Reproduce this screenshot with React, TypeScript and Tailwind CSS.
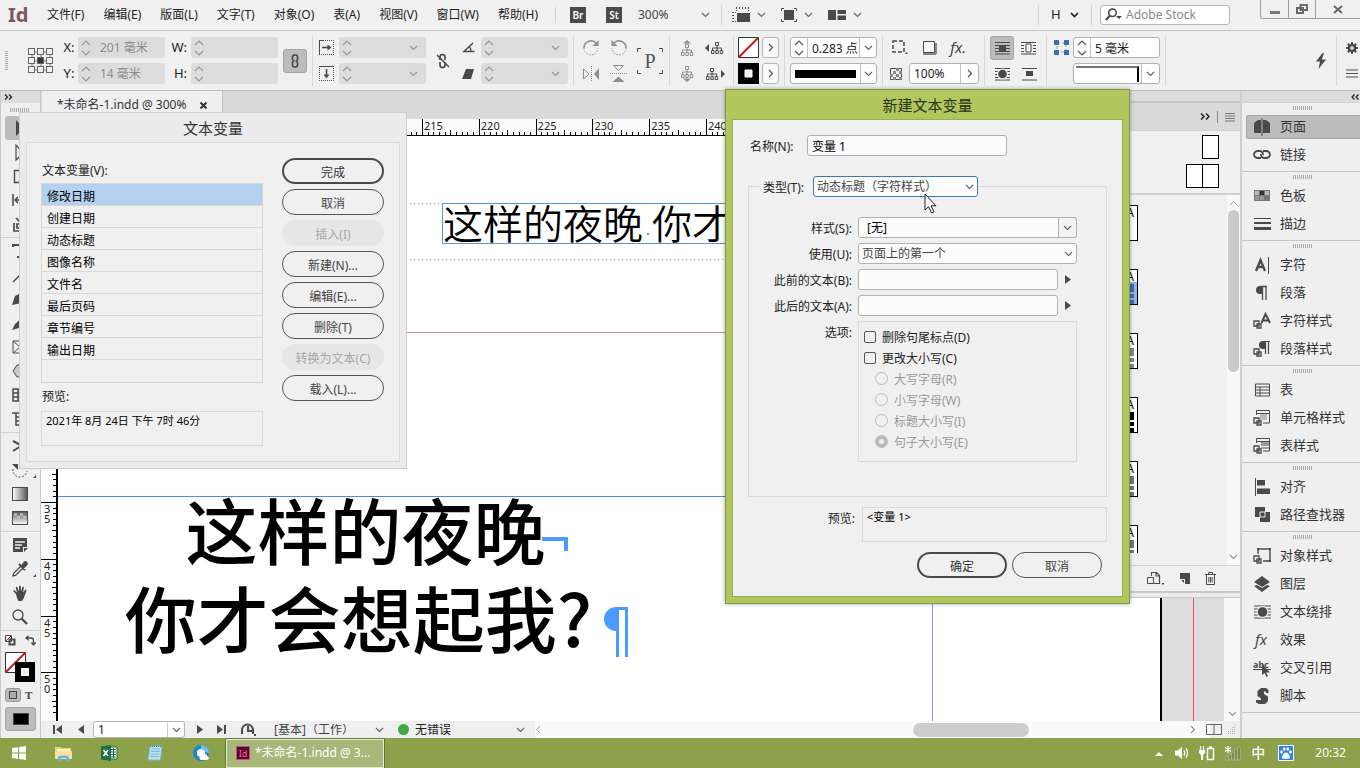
import React from "react";

type Kids = { children?: React.ReactNode };

function Svg({ w, h, children, className = "" }: Kids & { w: number; h: number; className?: string }) {
  return (
    <svg width={w} height={h} viewBox={`0 0 ${w} ${h}`} fill="none" stroke="none" aria-hidden="true" className={`shrink-0 overflow-visible ${className}`}>
      {children}
    </svg>
  );
}

const D = "#4a4a4a";
const G = "#8f8f8f";

function Chevron({ className = "", color = "#666" }: { className?: string; color?: string }) {
  return (
    <Svg w={9} h={6} className={className}>
      <path d="M1 1l3.5 3.5L8 1" stroke={color} strokeWidth="1.2" />
    </Svg>
  );
}

function ChevronRight({ color = "#555" }: { color?: string }) {
  return (
    <Svg w={6} h={9}>
      <path d="M1 1l3.5 3.5L1 8" stroke={color} strokeWidth="1.2" />
    </Svg>
  );
}

function Spinner({ color = "#999" }: { color?: string }) {
  return (
    <Svg w={10} h={16}>
      <path d="M1 5l4-4 4 4M1 11l4 4 4-4" stroke={color} strokeWidth="1.2" />
    </Svg>
  );
}

function Sep() {
  return <div className="my-1 w-px shrink-0 self-stretch bg-[#d8d8d8]" />;
}

function GrayField({ label, value = "", arrow = false }: { label: string; value?: string; arrow?: boolean }) {
  return (
    <div className="flex h-[21px] w-[87px] items-center rounded-[3px] bg-[#dcdcdc] pr-1 pl-[3px]">
      <Spinner />
      <input aria-label={label} defaultValue={value} className="w-0 flex-1 bg-transparent pl-[9px] text-xs text-[#8a8a8a] outline-none" />
      {arrow && <Chevron color="#999" className="mr-1" />}
    </div>
  );
}

const menus = ["文件(F)", "编辑(E)", "版面(L)", "文字(T)", "对象(O)", "表(A)", "视图(V)", "窗口(W)", "帮助(H)"];

function MenuBar() {
  return (
    <header className="flex h-[31px] shrink-0 items-center border-b border-[#c6c6c6] text-xs text-[#222]">
      <div className="w-[47px] shrink-0 pl-2 text-xl leading-none font-bold text-[#7c5766]">Id</div>
      <nav className="flex w-[508px] shrink-0 gap-[19px]">
        {menus.map((m) => (
          <button key={m} className="whitespace-nowrap">{m}</button>
        ))}
      </nav>
      <div className="flex w-[166px] shrink-0 items-center border-l border-[#d4d4d4] pl-[14px]">
        <button className="h-4 w-4 bg-[#4a4a4a] text-[10px] leading-4 font-semibold text-white">Br</button>
        <button className="ml-5 h-4 w-4 bg-[#4a4a4a] text-[10px] leading-4 font-semibold text-white">St</button>
        <label className="relative ml-4 flex flex-1 items-center text-[#444]">
          <select aria-label="缩放" className="w-full appearance-none bg-transparent outline-none">
            <option>300%</option>
          </select>
          <Chevron className="pointer-events-none absolute right-[11px]" />
        </label>
      </div>
      <div className="flex h-5 items-center gap-[7px] border-l border-[#d4d4d4] pl-[10px]">
        <Svg w={18} h={16}>
          <path d="M5 6h13v9H5z" fill={D} />
          <path d="M4.500 0v4M7.500 0v3M10.500 0v3M13.500 0v3M16.500 0v4M0 5.500h4M0 8.500h3M0 11.500h3M0 14.500h4" stroke={D} strokeDasharray="2 1" />
        </Svg>
        <Chevron />
        <Svg w={16} h={14} className="ml-2">
          <path d="M3 2h10v10H3z" fill={D} />
          <path d="M.5 3V.5H3M13 .5h2.500V3M15.500 11v2.500H13M3 13.500H.5V11" stroke={D} />
        </Svg>
        <Chevron />
        <Svg w={18} h={12} className="ml-2">
          <path d="M0 1h8v10H0zM9.500 1H18v4H9.500zM9.500 6.500H18V11H9.500z" fill={D} />
        </Svg>
        <Chevron />
      </div>
      <div className="flex-1" />
      <button className="flex h-5 w-[53px] items-center gap-[9px] border-l border-[#d4d4d4] pl-3 text-[13px]">
        H <Svg w={9} h={6}><path d="M1 1l3.500 3.500L8 1" stroke="#222" strokeWidth="1.700" /></Svg>
      </button>
      <div className="flex h-5 items-center border-l border-[#d4d4d4] pl-2">
        <label className="flex h-5 w-[130px] items-center rounded-[3px] border border-[#b5b5b5] bg-white px-1">
          <Svg w={18} h={14}>
            <circle cx="7.500" cy="4.800" r="3.800" stroke="#444" strokeWidth="1.500" />
            <path d="M4.800 7.800L.8 12" stroke="#444" strokeWidth="2" />
            <path d="M11 8h6l-3 3z" fill="#444" />
          </Svg>
          <input placeholder="Adobe Stock" aria-label="Adobe Stock" className="w-0 flex-1 bg-transparent pl-[3px] text-xs outline-none placeholder:text-[#888]" />
        </label>
      </div>
      <div className="ml-[30px] flex h-[19px] w-[100px] self-start rounded-bl-[3px] border-b border-l border-[#9d9d9d]">
        <button aria-label="最小化" className="flex w-7 items-end justify-center border-r border-[#9d9d9d] pb-1">
          <Svg w={10} h={3}><path d="M0 0h10v3H0z" fill="#777" /></Svg>
        </button>
        <button aria-label="还原" className="flex w-[27px] items-center justify-center border-r border-[#9d9d9d]">
          <Svg w={12} h={10}><path d="M4.500 1h6.500v5H4.500zM1 4h6v5H1z" fill="#f0f0f0" stroke="#6a6a6a" strokeWidth="2" /></Svg>
        </button>
        <button aria-label="关闭" className="flex flex-1 items-center justify-center">
          <Svg w={10} h={9}><path d="M1 1l8 7M9 1L1 8" stroke="#666" strokeWidth="2" /></Svg>
        </button>
      </div>
    </header>
  );
}

function TwoRows({ children, className = "" }: Kids & { className?: string }) {
  return <div className={`flex shrink-0 flex-col gap-[5px] ${className}`}>{children}</div>;
}

function Cell({ children, className = "" }: Kids & { className?: string }) {
  return <div className={`flex h-[21px] items-center ${className}`}>{children}</div>;
}

function Tree({ color, arrow }: { color: string; arrow: "up" | "down" | "left" | "right" }) {
  const side = arrow === "left" || arrow === "right";
  return (
    <Svg w={20} h={16}>
      {arrow === "up" && <path d="M6 3.500L10 0l4 3.500z" fill={color} />}
      {arrow === "down" && <path d="M6 12.500h8L10 16z" fill={color} />}
      {arrow === "left" && <path d="M4 4L0 8l4 4z" fill={color} />}
      {arrow === "right" && <path d="M16 4l4 4-4 4z" fill={color} />}
      <g transform={side ? (arrow === "left" ? "translate(2 0)" : "translate(-3 0)") : arrow === "up" ? "translate(0 2)" : "translate(0 -2)"}>
        <path d="M8.500 2.500h3v3h-3zM4.500 10.500h2.500v3H4.500zM8.800 10.500h2.500v3H8.800zM13.200 10.500h2.500v3h-2.500z" stroke={color} />
        <path d="M10 5.500v5M5.500 10V8h9v2" stroke={color} />
      </g>
    </Svg>
  );
}

function WrapIcon({ shape }: { shape: "solid" | "box" | "circle" | "jump" }) {
  return (
    <Svg w={15} h={14}>
      <path d="M0 1.500h15M0 4.500h15M0 7.500h15M0 10.500h15M0 13h15" stroke={D} strokeWidth="1.200" />
      {shape === "solid" && <path d="M4 4h7v6H4z" fill={D} />}
      {shape === "box" && <><path d="M3 3h9v9H3z" fill="#f0f0f0" /><path d="M5 3h5v8H5z" fill="#fff" stroke={D} /></>}
      {shape === "circle" && <><circle cx="7.500" cy="7" r="5.500" fill="#f0f0f0" /><circle cx="7.500" cy="7" r="4.300" fill={D} /></>}
      {shape === "jump" && <><path d="M0 3h15v8.500H0z" fill="#f0f0f0" /><path d="M4 4h7v5H4z" fill={D} /></>}
    </Svg>
  );
}

function ControlBar() {
  return (
    <div className="flex h-[60px] shrink-0 items-center border-b border-[#bdbdbd] text-[13px] text-[#222]">
      <div className="ml-[5px] h-5 w-[3px] shrink-0 bg-[repeating-linear-gradient(#aaa_0_1px,transparent_1px_2px)]" />
      <Svg w={26} h={26} className="ml-5">
        <path d="M4 4h18v18H4zM4 13h18M13 4v18" stroke="#777" />
        {[0, 1, 2].map((r) => [0, 1, 2].map((c) => (
          <rect key={`${r}${c}`} x={c * 9 + 0.5} y={r * 9 + 0.5} width="6" height="6" fill={r === 1 && c === 1 ? "#333" : "#f0f0f0"} stroke="#666" />
        )))}
      </Svg>
      <TwoRows className="ml-1.5 w-[18px]">
        <Cell className="justify-center">X:</Cell>
        <Cell className="justify-center">Y:</Cell>
      </TwoRows>
      <TwoRows>
        <GrayField label="X" value="201 毫米" />
        <GrayField label="Y" value="14 毫米" />
      </TwoRows>
      <TwoRows className="w-[26px]">
        <Cell className="justify-end pr-1">W:</Cell>
        <Cell className="justify-end pr-1">H:</Cell>
      </TwoRows>
      <TwoRows>
        <GrayField label="W" />
        <GrayField label="H" />
      </TwoRows>
      <button aria-label="约束比例" className="mx-[5px] flex h-6 w-6 shrink-0 items-center justify-center rounded-[3px] border border-[#a5a5a5] bg-[#bcbcbc]">
        <Svg w={8} h={14}><path d="M1.500 6V3a2 2 0 012-2h1a2 2 0 012 2v2.500a2 2 0 01-2 2M6.500 8v3a2 2 0 01-2 2h-1a2 2 0 01-2-2V8.500a2 2 0 012-2" stroke="#444" strokeWidth="1.600" /></Svg>
      </button>
      <Sep />
      <TwoRows className="ml-1.5 w-5">
        <Cell><Svg w={15} h={15}><path d="M.5 0v15M0 .5h5" stroke={D} /><path d="M0 .5h14.500v14H0" stroke={D} strokeDasharray="1 1" /><path d="M3 7.500h7" stroke={D} strokeWidth="1.600" /><path d="M8.500 4.500l4 3-4 3z" fill={D} /></Svg></Cell>
        <Cell><Svg w={15} h={15}><path d="M0 .5h15" stroke={D} /><path d="M.5 0v14.500h14V0" stroke={D} strokeDasharray="1 1" /><path d="M7.500 3v6" stroke={D} strokeWidth="1.600" /><path d="M4.500 8.500h6l-3 4z" fill={D} /></Svg></Cell>
      </TwoRows>
      <TwoRows>
        <GrayField label="水平缩放" arrow />
        <GrayField label="垂直缩放" arrow />
      </TwoRows>
      <Svg w={14} h={16} className="ml-[10px]">
        <path d="M4 7V4a2.500 2.500 0 015 0v3M4 9v3a2.500 2.500 0 005 0V9" stroke={D} strokeWidth="1.700" />
        <path d="M1 2l12 12" stroke={D} strokeWidth="1.500" />
      </Svg>
      <TwoRows className="ml-3 w-[19px]">
        <Cell><Svg w={13} h={11}><path d="M11 1L2 9.500h10.500M7 4.500c1.500 1 2 2.800 2 5" stroke={D} strokeWidth="1.500" /></Svg></Cell>
        <Cell><Svg w={13} h={10}><path d="M4 0h8L9 10H0z" fill={D} /></Svg></Cell>
      </TwoRows>
      <TwoRows>
        <GrayField label="旋转" arrow />
        <GrayField label="切变" arrow />
      </TwoRows>
      <div className="w-[5px] shrink-0" />
      <Sep />
      <TwoRows className="ml-2">
        <Cell className="gap-2">
          <Svg w={19} h={17}><path d="M2 9a7 7 0 0112-5" stroke={G} strokeWidth="1.500" /><path d="M16.500 1v6h-6z" fill={G} /><path d="M2 9a7 7 0 0014 0" stroke={G} strokeDasharray="1.500 1.500" /></Svg>
          <Svg w={19} h={17}><path d="M17 9A7 7 0 005 4" stroke={G} strokeWidth="1.500" /><path d="M2.500 1v6h6z" fill={G} /><path d="M17 9a7 7 0 01-14 0" stroke={G} strokeDasharray="1.500 1.500" /></Svg>
        </Cell>
        <Cell className="gap-2">
          <Svg w={19} h={16}><path d="M1.500 3v10L7 8z" stroke={G} /><path d="M17 2v12l-5-6z" fill={G} /><path d="M9.500 0v16" stroke={G} strokeDasharray="1 1" /></Svg>
          <Svg w={19} h={17}><path d="M4.500 .5h10l-5 5z" stroke={G} /><path d="M3.500 17h12l-6-5.500z" fill={G} /><path d="M1 8.500h17" stroke={G} strokeDasharray="1 1" /></Svg>
        </Cell>
      </TwoRows>
      <div className="relative ml-[9px] flex h-[26px] w-[26px] shrink-0 items-center justify-center text-xl leading-none text-[#555] [font-family:'Liberation_Serif',serif]">
        <Svg w={26} h={26} className="absolute inset-0"><path d="M.5 4V.5H4M22 .5h3.500V4M25.500 22v3.500H22M4 25.500H.5V22" stroke={D} /></Svg>
        P
      </div>
      <div className="w-[6px] shrink-0" />
      <Sep />
      <TwoRows className="ml-[7px] w-[56px]">
        <Cell className="gap-2"><Tree color={G} arrow="up" /><Tree color={D} arrow="left" /></Cell>
        <Cell className="gap-2"><Tree color={G} arrow="down" /><Tree color={D} arrow="right" /></Cell>
      </TwoRows>
      <Sep />
      <TwoRows className="ml-1">
        <Cell className="gap-[3px]">
          <Svg w={21} h={21}><path d="M.5 .5h20v20H.5z" fill="#fff" stroke="#333" /><path d="M1 20L20 1" stroke="#c8171e" strokeWidth="2" /></Svg>
          <button aria-label="填色" className="flex h-[21px] w-[17px] items-center justify-center rounded-[3px] border border-[#b5b5b5] bg-[#fafafa]"><ChevronRight /></button>
        </Cell>
        <Cell className="gap-[3px]">
          <Svg w={21} h={21}><path d="M0 0h21v21H0z" fill="#000" /><path d="M7 7h7v7H7z" fill="#f0f0f0" stroke="#fff" /></Svg>
          <button aria-label="描边颜色" className="flex h-[21px] w-[17px] items-center justify-center rounded-[3px] border border-[#b5b5b5] bg-[#fafafa]"><ChevronRight /></button>
        </Cell>
      </TwoRows>
      <div className="w-[5px] shrink-0" />
      <Sep />
      <TwoRows className="ml-[5px] w-[87px]">
        <div className="flex h-[21px] items-center overflow-hidden rounded-[3px] border border-[#b0b0b0] bg-white text-xs">
          <span className="flex w-4 justify-center"><Spinner color="#555" /></span>
          <input aria-label="描边粗细" defaultValue="0.283 点" className="h-full w-0 flex-1 border-r border-l border-[#c0c0c0] pl-1 outline-none" />
          <span className="flex w-4 justify-center"><Chevron /></span>
        </div>
        <button aria-label="描边类型" className="flex h-[21px] items-center rounded-[3px] border border-[#b0b0b0] bg-white">
          <span className="mx-1 h-2 flex-1 bg-black" />
          <span className="flex h-full w-4 items-center justify-center border-l border-[#c0c0c0]"><Chevron /></span>
        </button>
      </TwoRows>
      <div className="w-[5px] shrink-0" />
      <Sep />
      <TwoRows className="ml-[7px] w-[94px]">
        <Cell className="justify-between pr-[18px] pl-0.5">
          <Svg w={16} h={15}><path d="M1 1h11v11H1z" stroke={D} strokeWidth="1.500" strokeDasharray="4 2" /><path d="M13.500 12.500h2v1.500h-2z" fill={D} /></Svg>
          <Svg w={15} h={15}><path d="M1.500 1.500h11v11h-11z" fill="#f6f6f6" stroke={D} /><path d="M1 14h13M14 3v11" stroke="#888" strokeWidth="2" /></Svg>
          <span className="text-[15px] leading-none text-[#444] italic">fx.</span>
        </Cell>
        <Cell className="gap-[6px]">
          <Svg w={13} h={12}><path d="M.5 .5h11v11H.5z" stroke={D} /><path d="M3 3h3v3H3zM6 6h3v3H6zM9 3h3v3H9zM3 9h3v3H3zM9 9h3v3H9zM0 6h3v3H0zM6 0h3v3H6z" fill="#888" /></Svg>
          <div className="flex h-[21px] w-[70px] items-center rounded-[3px] border border-[#b0b0b0] bg-white text-xs">
            <input aria-label="不透明度" defaultValue="100%" className="h-full w-0 flex-1 pl-1 outline-none" />
            <span className="flex h-full w-[18px] items-center justify-center border-l border-[#c0c0c0]"><ChevronRight /></span>
          </div>
        </Cell>
      </TwoRows>
      <Sep />
      <TwoRows className="ml-[5px] w-[56px]">
        <Cell className="gap-[7px]">
          <span className="flex h-6 w-6 items-center justify-center rounded-[3px] border border-[#a5a5a5] bg-[#bcbcbc]"><WrapIcon shape="solid" /></span>
          <WrapIcon shape="box" />
        </Cell>
        <Cell className="gap-3 pl-[5px]"><WrapIcon shape="circle" /><WrapIcon shape="jump" /></Cell>
      </TwoRows>
      <Sep />
      <TwoRows className="ml-[7px] w-[19px]">
        <Cell><Svg w={15} h={15}><path d="M3 3h9v9H3z" stroke="#999" strokeDasharray="3 2" /><path d="M0 0h5v5H0zM10 0h5v5h-5zM0 10h5v5H0zM10 10h5v5h-5z" fill="#3a6fae" /></Svg></Cell>
        <Cell />
      </TwoRows>
      <TwoRows className="w-[87px]">
        <div className="flex h-[21px] items-center overflow-hidden rounded-[3px] border border-[#b0b0b0] bg-white text-xs">
          <span className="flex w-4 justify-center"><Spinner color="#555" /></span>
          <input aria-label="转角大小" defaultValue="5 毫米" className="h-full w-0 flex-1 border-l border-[#c0c0c0] pl-1 outline-none" />
        </div>
        <button aria-label="转角形状" className="flex h-[21px] items-center rounded-[3px] border border-[#b0b0b0] bg-white">
          <span className="mx-0.5 h-4 flex-1 border-t-2 border-r-2 border-t-[#777] border-r-black" />
          <span className="flex h-full w-[18px] items-center justify-center border-l border-[#c0c0c0]"><Chevron /></span>
        </button>
      </TwoRows>
      <div className="w-[5px] shrink-0" />
      <Sep />
      <div className="flex-1" />
      <Svg w={10} h={16} className="mr-[10px]"><path d="M6.500 0L0 8.500h4L2.500 16 10 6.500H5.800L8 0z" fill={D} /></Svg>
      <Sep />
      <TwoRows className="w-[23px]">
        <Cell className="justify-end pr-[2px]">
          <Svg w={12} h={12}><circle cx="6" cy="6" r="3" stroke={D} strokeWidth="2.500" /><path d="M6 0v2.500M6 9.500V12M0 6h2.500M9.500 6H12M1.800 1.800l1.700 1.700M8.500 8.500l1.700 1.700M1.800 10.200l1.700-1.700M8.500 3.500l1.700-1.700" stroke={D} strokeWidth="2" /></Svg>
        </Cell>
        <Cell className="justify-end pr-[2px]"><Svg w={12} h={9}><path d="M0 1h12M0 4.500h12M0 8h12" stroke={D} /></Svg></Cell>
      </TwoRows>
    </div>
  );
}

const GRIP = "bg-[repeating-linear-gradient(90deg,#aaa_0_1px,transparent_1px_2px)]";

const toolGroups: { name: string; icon: React.ReactNode; more?: boolean }[][] = [
  [
    { name: "选择", icon: <path d="M4 0v16l4-4 6-1z" fill={D} /> },
    { name: "直接选择", icon: <path d="M4 1v15l4-4 5-1z" stroke={D} strokeWidth="1.200" /> },
    { name: "页面", icon: <path d="M2.500 2.500h11v12h-11z" stroke={D} strokeWidth="1.400" /> },
    { name: "间隙", icon: <path d="M1 2v12M15 2v12M3 8h10M6 5L3 8l3 3M10 5l3 3-3 3" stroke={D} strokeWidth="1.500" /> },
    { name: "内容收集器", icon: <path d="M2 7v8h12V7M5 8h7v4H5zM4 2l4 4" stroke={D} strokeWidth="1.700" /> },
  ],
  [
    { name: "文字", icon: <path d="M1 4V2h14v2M8 2v12M5 14h6" stroke={D} strokeWidth="2" /> },
    { name: "直线", icon: <path d="M1 15L15 1" stroke={D} strokeWidth="1.500" /> },
    { name: "钢笔", icon: <path d="M0 14l3-9 6-3 5 5-4 5z" fill={D} /> },
    { name: "铅笔", icon: <path d="M0 15l3-6 9-8 4 4-9 8z" fill={D} /> },
    { name: "矩形框架", icon: <path d="M1 2h14v12H1zM1 2l14 12M15 2L1 14" stroke={D} /> },
    { name: "多边形", icon: <path d="M1 8l4-6h6l4 6-4 6H5z" fill="#c8c8c8" stroke={D} /> },
    { name: "水平网格", icon: <path d="M1 2h14v12H1zM1 6h14M1 10h14M6 2v12" stroke={D} strokeWidth="1.500" /> },
    { name: "垂直网格", icon: <path d="M0 2h14M4 2v12h6V2M4 6h6M4 10h6" stroke={D} strokeWidth="1.500" /> },
  ],
  [
    { name: "剪刀", icon: <path d="M1 3l13 7M1 13l13-8" stroke={D} strokeWidth="2" /> },
    { name: "自由变换", icon: <><path d="M1 7a7 7 0 0014 2" stroke={D} strokeDasharray="2 1.500" /><path d="M0 2h6v6z" fill={D} /></>, more: true },
    { name: "渐变色板", icon: <rect x=".5" y="1.500" width="15" height="13" fill="url(#gradH)" stroke={D} /> },
    { name: "渐变羽化", icon: <><rect x=".5" y="1.500" width="15" height="13" fill="url(#gradV)" stroke={D} /><path d="M2 3h3v3H2zM8 3h3v3H8zM5 6h3v2H5zM11 6h3v2h-3z" fill="#ddd" opacity=".6" /></> },
  ],
  [
    { name: "附注", icon: <><path d="M1 1h14v9h-4v5H1z" fill={D} /><path d="M3 5h10M3 8h7M3 11h5" stroke="#eee" strokeWidth="1.300" /><path d="M12 15v-4h4z" fill={D} /></> },
    { name: "吸管", icon: <><path d="M9 5l-7.500 7.500L1 15l2.500-.5L11 7" stroke={D} strokeWidth="1.300" /><path d="M7 3l6 6M10 5l2.500-3.500c1.200-1 3 .5 2 2L11 7z" stroke={D} strokeWidth="2" fill={D} /></>, more: true },
    { name: "抓手", icon: <path d="M4 9L1.500 6.500c-.6-1 .6-1.500 1.300-1L5 7.500 3.800 2.800c0-1.200 1.400-1.300 1.700-.2L7 6.500 7 1.500c.2-1.200 1.600-1.200 1.800 0l.2 5 1.300-4.200c.4-1 1.700-.7 1.600.4L11 7.500l2-2.500c.8-.8 1.800 0 1.400.9L12.500 11c-.7 2.500-1.500 4-3 5h-3C5 14 4.500 11 4 9z" fill={D} /> },
    { name: "缩放显示", icon: <><circle cx="6" cy="6" r="5" stroke={D} strokeWidth="1.300" /><path d="M9.500 9.500L15 15" stroke={D} strokeWidth="2.300" /></> },
  ],
];

function Toolbox() {
  return (
    <aside className="flex w-[41px] shrink-0 flex-col border-r border-l border-[#c9c9c9] bg-[#efefef]">
      <div className="flex h-3 shrink-0 items-center bg-[#dcdcdc] pl-1">
        <Svg w={8} h={6}><path d="M0 .5L2.500 3 0 5.500M4 .5L6.500 3 4 5.500" stroke="#222" strokeWidth="1.300" /></Svg>
      </div>
      <div className="flex h-[13px] shrink-0 items-center pl-[9px]"><div className={`h-1 w-5 ${GRIP}`} /></div>
      {toolGroups.map((g, gi) => (
        <div key={gi} className="flex shrink-0 flex-col border-b border-[#d2d2d2] pb-px">
          {gi > 0 && <div className="h-px" />}
          {g.map((t, i) => (
            <button key={t.name} aria-label={t.name} className={`relative mx-1 flex h-6 items-center justify-center rounded-[3px] ${gi === 0 && i === 0 ? "bg-[#bcbcbc]" : ""}`}>
              <Svg w={16} h={16} className="mr-px">{t.icon}</Svg>
              {t.more && <Svg w={3} h={3} className="absolute right-0 bottom-1"><path d="M3 0v3H0z" fill={D} /></Svg>}
            </button>
          ))}
        </div>
      ))}
      <div className="flex shrink-0 items-center justify-between px-1 pt-1">
        <Svg w={11} h={11}><path d="M.5 .5h6v6h-6z" fill="#fff" stroke={D} /><path d="M1 6l5-5" stroke="#c8171e" /><path d="M4.500 4.500h5v5h-5z" stroke={D} strokeWidth="2" /></Svg>
        <Svg w={11} h={11}><path d="M3 3h3a2.500 2.500 0 012.500 2.500V8" stroke={D} strokeWidth="1.300" /><path d="M3.500 0v6L0 3zM5.500 7.500h6l-3 3.500z" fill={D} /></Svg>
      </div>
      <Svg w={30} h={30} className="mt-[6px] ml-1">
        <path d="M.5 .5h20v20H.5z" fill="#fff" stroke="#333" /><path d="M1 20L20 1" stroke="#c8171e" strokeWidth="2" />
        <path d="M10 10h20v20H10z" fill="#000" /><path d="M16.500 16.500h7v7h-7z" fill="#efefef" stroke="#fff" />
      </Svg>
      <div className="mt-[6px] flex shrink-0 items-center gap-1 px-1">
        <span className="flex h-3.5 w-4 items-center justify-center rounded-[3px] border border-[#999] bg-[#bcbcbc]"><span className="h-2 w-2 border border-[#444] bg-[#aaa]" /></span>
        <span className="text-[11px] leading-none font-bold text-[#444] [font-family:'Liberation_Serif',serif]">T</span>
      </div>
      <div className="mx-1 mt-[5px] flex h-6 shrink-0 items-center justify-center rounded-[3px] border border-[#a5a5a5] bg-[#bcbcbc]"><span className="h-3 w-4 border border-[#444] bg-black" /></div>
    </aside>
  );
}

const MM = 56.8;

function RulerTop() {
  const ticks = [];
  for (let i = -60; i < 150; i++) {
    const x = Math.round(381 + (i * MM) / 10);
    if (x > 0) ticks.push(`M${x}.5 ${i % 10 === 0 ? 0 : i % 5 === 0 ? 11 : 13}v17`);
  }
  return (
    <div className="h-[17px] shrink-0 overflow-hidden border-b border-black bg-[#fbfbfb]">
      <Svg w={1183} h={16}>
        <path d={ticks.join("")} stroke="#000" />
        {Array.from({ length: 14 }, (_, i) => (
          <text key={i} x={383 + i * MM} y={11} fontSize="11" fill="#222">{215 + i * 5}</text>
        ))}
      </Svg>
    </div>
  );
}

function RulerLeft() {
  const ticks = [];
  for (let i = -60; i < 38; i++) {
    const y = Math.round(366 + (i * MM) / 10);
    if (y > 0) ticks.push(`M${i % 10 === 0 ? 0 : i % 5 === 0 ? 11 : 12} ${y}.5H15`);
  }
  return (
    <div className="w-[17px] shrink-0 overflow-hidden border-r-2 border-black bg-[#fbfbfb]">
      <Svg w={15} h={585}>
        <path d={ticks.join("")} stroke="#000" />
        {[35, 40, 45, 50].map((n, i) => (
          <text key={n} fontSize="11" fill="#222">
            <tspan x="3" y={377 + i * MM}>{String(n)[0]}</tspan>
            <tspan x="3" y={387 + i * MM}>{String(n)[1]}</tspan>
          </text>
        ))}
      </Svg>
    </div>
  );
}

function Canvas() {
  return (
    <div className="relative flex-1 overflow-hidden bg-white text-black [font-family:'Noto_Sans_CJK_SC',sans-serif]">
      <div className="absolute inset-y-0 right-0 w-16 border-l-2 border-black bg-[#dcdcdc]" />
      <div className="absolute inset-y-0 right-[30px] w-px bg-[#f0505e]" />
      <div className="absolute top-[67px] left-0 h-px w-[384px] bg-[repeating-linear-gradient(90deg,#7d9fb8_0_1px,transparent_1px_4px)]" />
      <div className="absolute top-[123px] left-0 h-px w-[874px] bg-[repeating-linear-gradient(90deg,#7d9fb8_0_1px,transparent_1px_4px)]" />
      <div className="absolute top-[196px] left-0 h-px w-[874px] bg-[#c785a8]" />
      <div className="absolute top-[360px] left-0 h-px w-[874px] bg-[#4d8ee0]" />
      <div className="absolute top-[360px] bottom-0 left-[874px] w-px bg-[#9a94e0]" />
      <div className="absolute top-[67px] left-[384px] h-[41px] w-[490px] border border-[#5a96d8] text-[40px] leading-[36px] font-[350] whitespace-pre">
        这样的夜晚<span className="relative"> <span className="absolute bottom-4 left-1 h-0.5 w-0.5 bg-[#4d9aff]" /></span>你才会想起我?
      </div>
      <div className="absolute top-[348px] left-0 w-[637px] text-center text-[72px] leading-[88px] font-medium">
        <div className="flex items-center justify-center">
          这样的夜晚
          <Svg w={26} h={14} className="mt-8 -ml-1"><path d="M0 2h24v12" stroke="#4d9aff" strokeWidth="4" /></Svg>
        </div>
        <div className="flex items-center justify-center">
          你才会想起我<span className="mr-3">?</span>
          <Svg w={24} h={50} className="mt-8"><circle cx="12" cy="12" r="12" fill="#4d9aff" /><path d="M12 0h12v24H12z" fill="#4d9aff" /><path d="M13.500 0v50M22.500 0v50" stroke="#4d9aff" strokeWidth="3" /><path d="M15 3h6v31h-6z" fill="#fff" /></Svg>
        </div>
      </div>
    </div>
  );
}

function StatusBar() {
  return (
    <div className="flex h-[17px] shrink-0 items-center bg-[#efefef] text-xs text-[#222]">
      <div className="flex items-center gap-4 pr-[9px] pl-3">
        <Svg w={9} h={9}><path d="M0 0h2v9H0zM9 0v9L3 4.500z" fill={D} /></Svg>
        <Svg w={6} h={9}><path d="M6 0v9L0 4.500z" fill={D} /></Svg>
      </div>
      <label className="relative flex h-[17px] w-[92px] shrink-0 items-center rounded-[3px] border border-[#b5b5b5] bg-white">
        <select aria-label="页码" className="w-full appearance-none bg-transparent pl-1 leading-none outline-none"><option>1</option></select>
        <span className="pointer-events-none absolute right-0 flex h-full w-[17px] items-center justify-center border-l border-[#ccc]"><Chevron /></span>
      </label>
      <div className="flex w-[89px] shrink-0 items-center gap-[14px] pl-3">
        <Svg w={6} h={9}><path d="M0 0v9l6-4.500z" fill={D} /></Svg>
        <Svg w={9} h={9}><path d="M7 0h2v9H7zM0 0v9l6-4.500z" fill={D} /></Svg>
        <Svg w={17} h={13}><path d="M2 11V7a5.500 5.500 0 0111 0v4M8 3v5h5" stroke={D} strokeWidth="2" /><path d="M14 11h2v2h-2z" fill={D} /></Svg>
      </div>
      <label className="relative flex w-[124px] shrink-0 items-center text-[#444]">
        <select aria-label="印前检查配置" className="w-full appearance-none bg-transparent leading-none outline-none"><option>[基本]（工作）</option></select>
        <Chevron className="pointer-events-none absolute right-[14px]" />
      </label>
      <span className="h-[11px] w-[11px] shrink-0 rounded-full bg-[#3fa84a]" />
      <label className="relative ml-1.5 flex w-[120px] shrink-0 items-center">
        <select aria-label="错误" className="w-full appearance-none bg-transparent leading-none outline-none"><option>无错误</option></select>
        <Chevron className="pointer-events-none absolute right-[10px]" />
      </label>
      <div className="flex h-full flex-1 items-center bg-[#fafafa] pr-3.5">
        <Svg w={6} h={9}><path d="M5 1L1.500 4.500 5 8" stroke="#999" /></Svg>
        <div className="flex flex-1 pl-1"><div className="ml-[57%] h-3.5 w-[116px] rounded-full bg-[#cdcdcd]" /></div>
        <ChevronRight color="#999" />
      </div>
      <Svg w={16} h={11} className="ml-[-4px]"><path d="M.5 .5h15v10H.5zM8 .5v10" stroke="#666" /></Svg>
      <Svg w={10} h={10} className="mx-1"><path d="M8.500 0v10M6.500 2v8M4.500 4v6M2.500 6v4" stroke="#bbb" strokeDasharray="1 1" /></Svg>
    </div>
  );
}

const thumbStyles = [
  "", "bg-[#3f6db0]", "bg-[#888]", "bg-black", "bg-[#777]", "bg-[#777]",
];

function PagesPanel() {
  return (
    <section className="absolute top-0 right-0 flex h-[507px] w-[240px] flex-col bg-[#f0f0f0]">
      <div className="h-3 shrink-0 border-b-2 border-[#c4c4c4] bg-[#dcdcdc]" />
      <div className="flex h-7 shrink-0 items-center justify-end gap-[7px] border-b border-[#d2d2d2] bg-[#dadada] pr-[5px]">
        <Svg w={9} h={7}><path d="M0 .5L3 3.500 0 6.500M5 .5l3 3-3 3" stroke="#222" strokeWidth="1.500" /></Svg>
        <span className="h-3 w-px bg-[#888]" />
        <Svg w={10} h={8}><path d="M0 .5h10M0 3h10M0 5.500h10M0 8h10" stroke="#777" /></Svg>
      </div>
      <div className="flex h-16 shrink-0 flex-col items-end gap-[5px] border-b-2 border-[#d2d2d2] pt-1 pr-[21px]">
        <div className="h-6 w-[17px] shrink-0 border border-black bg-white" />
        <div className="flex h-6 w-[33px] shrink-0 border border-black bg-white"><div className="w-1/2 border-r border-black" /></div>
      </div>
      <div className="flex min-h-0 flex-1">
        <div className="flex flex-1 flex-col pt-[10px] pb-3">
          <div className="flex min-h-0 flex-col gap-7 overflow-hidden pl-[114px]">
            {thumbStyles.map((s, i) => (
              <div key={i} className={`flex h-9 w-6 shrink-0 flex-col items-end border border-black pr-[3px] ${i === 1 ? "bg-[linear-gradient(#fff_0_12px,#8db4ea_12px)]" : "bg-white"}`}>
                <span className="text-xs leading-[14px] text-black">A</span>
                {s && <><span className={`h-2 w-3 ${s}`} /><span className={`mt-0.5 h-1 w-3 ${s}`} /><span className={`mt-0.5 h-1 w-3 ${s}`} /></>}
              </div>
            ))}
          </div>
        </div>
        <div className="flex w-[13px] flex-col items-center bg-[#f8f8f8] py-[5px]">
          <Svg w={9} h={6}><path d="M1 5l3.500-3.500L8 5" stroke="#999" /></Svg>
          <div className="mt-1 h-[162px] w-[11px] rounded-full bg-[#cacaca]" />
          <div className="flex-1" />
          <Chevron color="#999" />
        </div>
      </div>
      <div className="flex h-[26px] shrink-0 items-center justify-end gap-[15px] border-t border-[#d2d2d2] pr-6">
        <Svg w={18} h={13}><path d="M.5 5.500h6v6h-6z" stroke={D} /><path d="M4.500 4V.5h5l3 3v8h-6M9 1v3h3" stroke={D} strokeWidth="1.200" /><path d="M15 11h2v1.500h-2z" fill={D} /></Svg>
        <Svg w={10} h={11}><path d="M0 0h10v11H5V6H0z" fill={D} /><path d="M1 7h3v3z" fill={D} /></Svg>
        <Svg w={11} h={13}><path d="M0 2.500h11M3.500 2V.5h4V2M1.500 3v9.500h8V3M3.800 5v5.500M5.500 5v5.500M7.200 5v5.500" stroke={D} /></Svg>
      </div>
      <div className="h-[7px] shrink-0 border-t-2 border-b border-[#c9c9c9] bg-[#ebebeb]" />
    </section>
  );
}

function DocumentArea() {
  return (
    <main className="relative flex min-w-0 flex-1 flex-col">
      <div className="flex h-7 shrink-0 bg-[#d9d9d9]">
        <div className="ml-px flex w-[181px] items-center border-r border-[#c4c4c4] bg-[#efefef] pl-[15px] text-xs text-[#333]">
          <span className="w-[143px] whitespace-nowrap">*未命名-1.indd @ 300%</span>
          <button aria-label="关闭文档"><Svg w={7} h={7}><path d="M.5 .5l6 6M6.500 .5l-6 6" stroke="#333" strokeWidth="2" /></Svg></button>
        </div>
      </div>
      <RulerTop />
      <div className="flex min-h-0 flex-1">
        <RulerLeft />
        <Canvas />
        <div className="flex w-4 shrink-0 flex-col items-center justify-end bg-[#f8f8f8] pb-1"><Chevron color="#999" /></div>
      </div>
      <StatusBar />
      <PagesPanel />
    </main>
  );
}

const stylePair = <path d="M1 9h5v5H1z M4 12h4v4H4z" fill="#efefef" stroke={D} strokeWidth="1.300" />;

const panelGroups: { label: string; icon: React.ReactNode }[][] = [
  [
    { label: "页面", icon: <><path d="M1 5l4-3h3v13H1zM10 2h3l4 3v10h-7z" fill={D} /><path d="M9 0v18" stroke={D} /></> },
    { label: "链接", icon: <path d="M8 12H5a4 3.500 0 010-7h2a3.500 3.500 0 013 4M10 5h3a4 3.500 0 010 7h-2a3.500 3.500 0 01-3-4" stroke={D} strokeWidth="1.800" /> },
  ],
  [
    { label: "色板", icon: <><path d="M1 3h16v11H1z" fill="#777" /><path d="M2 4h4v4H2zM12 4h4v4h-4z" fill="#bbb" /><path d="M7 4h4v4H7z" fill="#333" /><path d="M2 9h4v4H2zM7 9h4v4H7z" fill="#999" /></> },
    { label: "描边", icon: <><path d="M1 3.500h17" stroke={D} /><path d="M1 8h17" stroke={D} strokeWidth="2" /><path d="M1 13.500h17" stroke={D} strokeWidth="3" /></> },
  ],
  [
    { label: "字符", icon: <><path d="M3 15L7.500 4 12 15M4.500 11h6" stroke={D} strokeWidth="2.300" /><path d="M15.500 1v17" stroke={D} /></> },
    { label: "段落", icon: <><path d="M9 2v8H7a4 4 0 010-8z" fill={D} /><path d="M9.500 2v14M13 2v14M7 2.500h7" stroke={D} strokeWidth="1.300" /></> },
    { label: "字符样式", icon: <><path d="M8.500 11L12.500 2 17 11M10 8.500h5" stroke={D} strokeWidth="2" />{stylePair}</> },
    { label: "段落样式", icon: <><path d="M12 1v8h-2a4 4 0 010-8z" fill={D} /><path d="M12.500 1v13M15.500 1v13M10 1.500h7" stroke={D} strokeWidth="1.200" />{stylePair}</> },
  ],
  [
    { label: "表", icon: <path d="M2.500 3v12h14V3zM2.500 6h14M2.500 9h14M2.500 12h14M7 6v9" stroke={D} /> },
    { label: "单元格样式", icon: <><path d="M3.500 6V1.500h13V14H10M3 4.500h13" stroke={D} /><path d="M7 5h7v6H7z" fill="#bbb" />{stylePair}</> },
    { label: "表样式", icon: <><path d="M3.500 6V1.500h13V14H10M3 4.500h13M8 8h8M8 11h8" stroke={D} /><path d="M8 5h8v4H8z" fill="#999" />{stylePair}</> },
  ],
  [
    { label: "对齐", icon: <><path d="M2.500 0v18" stroke={D} /><path d="M4 2h8v5.500H4zM4 10.500h13V16H4z" fill={D} /></> },
    { label: "路径查找器", icon: <><path d="M2 1h10v10H2zM7 6h10v10H7z" fill={D} /><path d="M7 6h5v5H7z" fill={D} stroke="#efefef" /></> },
  ],
  [
    { label: "对象样式", icon: <><path d="M5 7V2h12v12h-7" stroke={D} strokeWidth="1.400" /><path d="M4 1h2v2H4zM16 1h2v2h-2zM16 13h2v2h-2z" fill={D} />{stylePair}</> },
    { label: "图层", icon: <><path d="M9 1l8 6-8 5-8-5z" fill={D} /><path d="M1 11l3-1 5 3 5-3 3 1-8 6z" fill={D} /></> },
    { label: "文本绕排", icon: <><path d="M1 3h17M1 6h17M1 9h17M1 12h17M1 15h17" stroke={D} /><circle cx="9.500" cy="9" r="6" fill="#efefef" /><circle cx="9.500" cy="9" r="4.800" fill={D} /></> },
    { label: "效果", icon: <text x="2" y="14" fontSize="15" fontStyle="italic" fill={D}>fx</text> },
    { label: "交叉引用", icon: <><text x="0" y="9" fontSize="9" fontWeight="bold" fill={D}>abc</text><path d="M0 10.500h18" stroke={D} /><path d="M9 5v11l2.500-2 2 4 1.500-1-2-3.500h4z" fill={D} /></> },
    { label: "脚本", icon: <path d="M8 1h5l2.500 2v3H13V4.500h-2V7l4 2.500V14l-3 3H6l-3-1.500V13h5v-1.500L4.500 9V4z" fill={D} /> },
  ],
];

function PanelDock() {
  return (
    <aside className="flex w-[120px] shrink-0 flex-col border-l-2 border-[#cfcfcf] bg-[#efefef] text-[13px] text-[#333]">
      <div className="flex h-3 shrink-0 items-center justify-end border-b border-[#d0d0d0] bg-[#dcdcdc] pr-px">
        <Svg w={8} h={6}><path d="M3.500 .5L1 3l2.500 2.500M7.500 .5L5 3l2.500 2.500" stroke="#222" strokeWidth="1.300" /></Svg>
      </div>
      {panelGroups.map((g, gi) => (
        <div key={gi} className="flex shrink-0 flex-col border-b border-[#c6c6c6] pb-0.5">
          <div className="flex h-[10px] items-center pl-[51px]"><div className={`h-1 w-5 ${GRIP}`} /></div>
          {g.map((p, i) => (
            <div key={p.label} className="flex h-7 items-center pl-1">
              <button className={`flex h-6 flex-1 items-center gap-[9px] rounded-l-[3px] pl-1.5 whitespace-nowrap ${gi === 0 && i === 0 ? "border border-r-0 border-[#a5a5a5] bg-[#bcbcbc]" : "border border-r-0 border-transparent"}`}>
                <Svg w={18} h={18}>{p.icon}</Svg>
                {p.label}
              </button>
            </div>
          ))}
        </div>
      ))}
    </aside>
  );
}

function PillButton({ children, strong = false, disabled = false, className = "" }: Kids & { strong?: boolean; disabled?: boolean; className?: string }) {
  const look = disabled
    ? "border border-transparent bg-[#e6e6e6] text-[#a8a8a8]"
    : strong
      ? "border-2 border-[#4a4a4a] text-[#333]"
      : "border border-[#555] text-[#444]";
  return (
    <button disabled={disabled} className={`flex h-[26px] items-center justify-center rounded-full pt-[3px] ${look} ${className}`}>
      {children}
    </button>
  );
}

const variables = ["修改日期", "创建日期", "动态标题", "图像名称", "文件名", "最后页码", "章节编号", "输出日期"];
const actions: { t: string; strong?: boolean; off?: boolean }[] = [
  { t: "完成", strong: true }, { t: "取消" }, { t: "插入(I)", off: true }, { t: "新建(N)..." },
  { t: "编辑(E)..." }, { t: "删除(T)" }, { t: "转换为文本(C)", off: true }, { t: "载入(L)..." },
];

function VariablesDialog() {
  return (
    <section role="dialog" aria-label="文本变量" className="absolute top-[112px] left-[19px] w-[388px] border border-[#cfcfcf] bg-[#ebebeb] px-1.5 pb-1.5 text-xs text-[#222]">
      <h2 className="flex h-[29px] items-center justify-center text-[15px] text-[#333]">文本变量</h2>
      <div className="flex h-[320px] justify-between border border-[#dadada] bg-[#f0f0f0] pt-[15px] pr-[15px] pl-[14px]">
        <div className="w-[222px]">
          <div className="flex h-[25px] items-center pl-px">文本变量(V):</div>
          <ul className="h-[200px] border border-[#d8d8d8] text-black">
            {variables.map((v, i) => (
              <li key={v} className={`flex h-[22px] items-center border-b border-[#d8d8d8] pt-1 pl-[5px] ${i === 0 ? "bg-[#b4d1ef]" : ""}`}>{v}</li>
            ))}
          </ul>
          <div className="flex h-7 items-center pl-px">预览:</div>
          <div className="h-[35px] border border-[#dadada] pt-px pl-1 text-[11px] leading-4 text-black">2021年 8月 24日 下午 7时 46分</div>
        </div>
        <div className="flex w-[102px] flex-col gap-[5px]">
          {actions.map((a) => (
            <PillButton key={a.t} strong={a.strong} disabled={a.off}>{a.t}</PillButton>
          ))}
        </div>
      </div>
    </section>
  );
}

const field = "h-[21px] rounded-[3px] border border-[#b0b0b0] bg-[#fcfcfc]";
const formLabel = "flex h-[21px] items-center justify-end pt-[3px] leading-none";

function Select({ id, value, className = "" }: { id: string; value: string; className?: string }) {
  return (
    <div className="relative flex items-center">
      <select id={id} className={`w-full appearance-none rounded-[3px] border bg-[#fcfcfc] pl-[3px] text-xs text-[#444] outline-none ${className}`}>
        <option>{value}</option>
      </select>
      <Chevron className="pointer-events-none absolute right-1" />
    </div>
  );
}

function TextBefore({ id, label }: { id: string; label: string }) {
  return (
    <>
      <label htmlFor={id} className={formLabel}>{label}</label>
      <div className="flex items-center gap-[7px]">
        <input id={id} className={`w-[200px] px-1 ${field}`} />
        <Svg w={6} h={9}><path d="M0 0v9l6-4.500z" fill={D} /></Svg>
      </div>
    </>
  );
}

function NewVariableDialog() {
  return (
    <section role="dialog" aria-label="新建文本变量" className="absolute top-[89px] left-[725px] w-[405px] border border-[#83964a] bg-[#b1c75e] px-1.5 pb-1.5 text-xs text-[#222] shadow-[0_0_4px_rgba(0,0,0,0.35)]">
      <h2 className="flex h-[29px] items-center justify-center text-[15px] text-[#2c3316]">新建文本变量</h2>
      <div className="h-[478px] border border-[#98ad4e] bg-[#f0f0f0] px-[15px] pt-[15px]">
        <div className="flex items-center">
          <label htmlFor="name" className="w-[59px] shrink-0 pt-0.5 pl-0.5 whitespace-nowrap">名称(N):</label>
          <input id="name" defaultValue="变量 1" className={`w-[200px] px-1 text-black ${field}`} />
        </div>
        <fieldset className="mt-5 h-[321px] min-w-0 border border-[#dadada]">
          <legend className="ml-[10px] flex h-[21px] items-center pl-1">
            <label htmlFor="type" className="w-[50px] pt-0.5 whitespace-nowrap">类型(T):</label>
            <div className="w-[165px]"><Select id="type" value="动态标题（字符样式）" className="h-[21px] border-[#3c78c0]" /></div>
          </legend>
          <div className="grid grid-cols-[103px_219px] gap-x-1.5 gap-y-[5px] pt-5">
            <label htmlFor="style" className={formLabel}>样式(S):</label>
            <div className="relative">
              <select id="style" className={`w-full appearance-none pl-2 text-xs text-black outline-none ${field}`}><option>[无]</option></select>
              <span className="pointer-events-none absolute inset-y-0 right-0 flex w-[19px] items-center justify-center rounded-r-[3px] border border-[#b0b0b0] bg-[#f3f3f3]"><Chevron /></span>
            </div>
            <label htmlFor="use" className={formLabel}>使用(U):</label>
            <Select id="use" value="页面上的第一个" className="h-[21px] border-[#b0b0b0]" />
            <TextBefore id="before" label="此前的文本(B):" />
            <TextBefore id="after" label="此后的文本(A):" />
            <div className={formLabel}>选项:</div>
            <div className="h-[141px] border border-[#dadada] pt-1 pl-[5px]">
              {["删除句尾标点(D)", "更改大小写(C)"].map((t) => (
                <label key={t} className="flex h-[21px] items-center gap-1.5">
                  <input type="checkbox" className="h-3 w-3 appearance-none rounded-xs border border-[#555]" />
                  <span className="pt-0.5">{t}</span>
                </label>
              ))}
              {["大写字母(R)", "小写字母(W)", "标题大小写(I)", "句子大小写(E)"].map((t, i) => (
                <label key={t} className="flex h-[21px] items-center gap-1.5 pl-[11px] text-[#9a9a9a]">
                  <input type="radio" name="case" disabled defaultChecked={i === 3} className="h-[13px] w-[13px] appearance-none rounded-full border border-[#bbb] checked:border-4" />
                  <span className="pt-0.5">{t}</span>
                </label>
              ))}
            </div>
          </div>
        </fieldset>
        <div className="mt-[10px] flex justify-end gap-[7px]">
          <div className="pt-1">预览:</div>
          <div className="h-[35px] w-[245px] border border-[#dadada] pt-px pl-1 text-[11px] leading-4 text-black">&lt;变量 1&gt;</div>
        </div>
        <div className="mt-[10px] flex justify-end gap-[5px] pr-[5px]">
          <PillButton strong className="w-[90px]">确定</PillButton>
          <PillButton className="w-[90px]">取消</PillButton>
        </div>
      </div>
    </section>
  );
}

function Taskbar() {
  return (
    <footer className="flex h-[30px] shrink-0 items-center bg-[#8da04a] text-white">
      <button aria-label="开始" className="ml-3 w-[43px] shrink-0">
        <Svg w={14} h={14}><path d="M0 2l6-.8v5.400H0zM7 1l7-1v6.600H7zM0 7.500h6v5.400L0 12zM7 7.500h7V14l-7-1z" fill="#fff" /></Svg>
      </button>
      <button aria-label="文件资源管理器" className="w-[46px] shrink-0">
        <Svg w={17} h={16}><path d="M0 2h6l1 1h9v11H0z" fill="#e9cf78" /><path d="M2 4h13v3H2z" fill="#fff6d0" /><path d="M0 6h17v8H0z" fill="#f6e19a" /><path d="M3 16v-4c0-2 11-2 11 0v4h-3v-3H6v3z" fill="#69b4e6" /></Svg>
      </button>
      <button aria-label="Excel" className="w-[46px] shrink-0">
        <Svg w={17} h={16}><path d="M8 2h8v12H8z" fill="#fff" stroke="#1e7145" /><path d="M10 4.500h5M10 7h5M10 9.500h5M10 12h5M12.500 3v10" stroke="#1e7145" /><path d="M0 1.500L10 0v16L0 14.500z" fill="#1e7145" /><path d="M2.500 5l4.500 6M7 5l-4.500 6" stroke="#fff" strokeWidth="1.500" /></Svg>
      </button>
      <button aria-label="记事本" className="w-[46px] shrink-0">
        <Svg w={16} h={16}><path d="M3 1h12l-1.500 14H1z" fill="#b9dff0" stroke="#7db6cf" /><path d="M4 4h9M4 6.500h9M3.500 9h9M3.300 11.500h9" stroke="#7fb9d8" /><path d="M3 1.500h12" stroke="#667" strokeDasharray="1 1" /></Svg>
      </button>
      <button aria-label="浏览器" className="w-[33px] shrink-0">
        <Svg w={16} h={16}><circle cx="8" cy="8" r="6" stroke="#1d86d8" strokeWidth="4" /><circle cx="8" cy="8" r="4" fill="#fff" /><path d="M8 0a8 8 0 018 8l-4-1a4 4 0 00-4-3z" fill="#6cc4f5" /><path d="M7 14.500a2.500 2.500 0 012-4 3 3 0 015.500 1c2 .5 1.500 3.500-.5 3.500H8z" fill="#fff" /></Svg>
      </button>
      <button className="flex h-[29px] w-[158px] shrink-0 items-center gap-[5px] border border-[#e6ecd0] bg-[#a9b87a] pl-[9px] text-xs outline outline-[#66753a]">
        <span className="flex h-3.5 w-3.5 items-center justify-center border border-[#d14a80] bg-[#4b0a2c] text-[9px] leading-none text-[#ff5fa2]">Id</span>
        <span className="whitespace-nowrap">*未命名-1.indd @ 3...</span>
      </button>
      <div className="ml-auto flex items-center pr-[14px] text-[13px]">
        <Svg w={8} h={5} className="mr-3"><path d="M0 5l4-4 4 4z" fill="#fff" /></Svg>
        <Svg w={15} h={14} className="mr-[9px]"><path d="M0 4.500h3L7 1v12L3 9.500H0z" fill="#fff" /><path d="M9 4.500c1 1.500 1 3.500 0 5M11 2.500c2 2.500 2 6.500 0 9" stroke="#fff" strokeWidth="1.300" /></Svg>
        <Svg w={16} h={15} className="mr-[9px]"><path d="M8.500 2.500h6v11h-6zM10 1h3" stroke="#fff" strokeWidth="1.500" /><path d="M1.500 0v4M4.500 0v4" stroke="#fff" strokeWidth="1.200" /><path d="M0 4h6v3L4 9v5H2V9L0 7z" fill="#fff" /></Svg>
        <Svg w={16} h={14} className="mr-[11px]"><path d="M2 10h2v4H2zM5 8h2v6H5zM8 6h2v8H8zM11 3h2v11h-2zM14 1h2v13h-2z" fill="#5d6a36" stroke="#cdd5ac" strokeWidth=".6" /><path d="M4 0v7M1 1.500l6 4M7 1.500l-6 4" stroke="#fff" strokeWidth="1.300" /></Svg>
        <span className="mr-[13px] text-sm font-medium">中</span>
        <Svg w={16} h={16} className="mr-[21px]"><path d="M.5 .5h15v15H.5z" fill="#2f86e0" stroke="#fff" /><ellipse cx="3.500" cy="7" rx="1.300" ry="1.700" fill="#fff" /><ellipse cx="6.300" cy="4" rx="1.300" ry="1.800" fill="#fff" /><ellipse cx="9.700" cy="4" rx="1.300" ry="1.800" fill="#fff" /><ellipse cx="12.500" cy="7" rx="1.300" ry="1.700" fill="#fff" /><path d="M8 7.500c2 0 4 3.500 4 5s-2 1.500-4 1.200c-2 .3-4 .3-4-1.200s2-5 4-5z" fill="#fff" /></Svg>
        <time className="text-xs">20:32</time>
      </div>
    </footer>
  );
}

export default function App() {
  return (
    <div className="relative flex h-screen min-h-[768px] flex-col overflow-hidden bg-[#f0f0f0] [font-family:'Noto_Sans','Noto_Sans_CJK_SC',sans-serif]">
      <svg width="0" height="0" className="absolute" aria-hidden="true">
        <defs>
          <linearGradient id="gradH"><stop offset="0" stopColor="#fff" /><stop offset="1" stopColor="#555" /></linearGradient>
          <linearGradient id="gradV" x2="0" y2="1"><stop offset="0" stopColor="#555" /><stop offset="1" stopColor="#fff" /></linearGradient>
        </defs>
      </svg>
      <MenuBar />
      <ControlBar />
      <div className="flex min-h-0 flex-1">
        <Toolbox />
        <DocumentArea />
        <PanelDock />
      </div>
      <Taskbar />
      <VariablesDialog />
      <NewVariableDialog />
      <Svg w={14} h={22} className="pointer-events-none absolute top-[193px] left-[924px]">
        <path d="M1 1v16l3.500-3.300 3 6.300 2.500-1.200-3-6H12z" fill="#fff" stroke="#222" />
      </Svg>
    </div>
  );
}
